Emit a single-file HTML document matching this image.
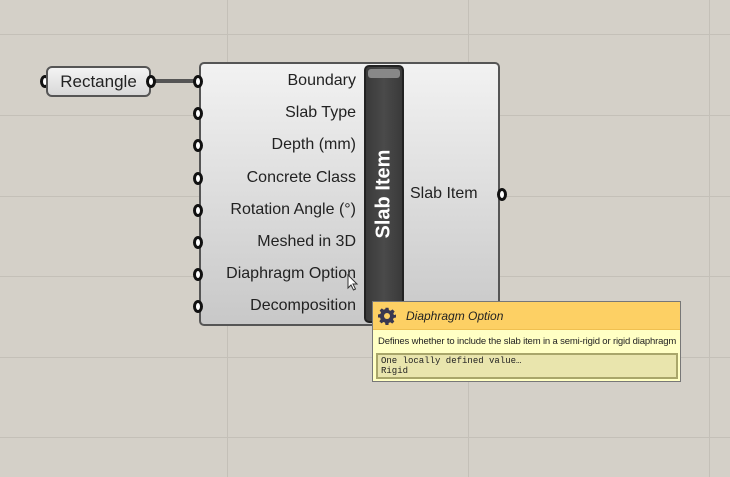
<!DOCTYPE html>
<html><head><meta charset="utf-8"><style>
*{margin:0;padding:0;box-sizing:border-box}
body{width:730px;height:477px;overflow:hidden;background:#d4d0c8;position:relative;font-family:"Liberation Sans",sans-serif}
.gh{position:absolute;left:0;width:730px;height:1px;background:#c4c0b8}
.gv{position:absolute;top:0;height:477px;width:1px;background:#c4c0b8}
.pill{position:absolute;left:46px;top:66px;width:105px;height:31px;border:2px solid #555;border-radius:6px;background:linear-gradient(#f4f4f4,#d8d8d8);font-size:17px;color:#222;text-align:center;line-height:27px}
.comp{position:absolute;left:199px;top:62px;width:301px;height:264px;border:2px solid #555;border-radius:5px;background:linear-gradient(#f2f2f2,#c8c8c8)}
.lbl{position:absolute;font-size:16px;color:#222;white-space:nowrap;line-height:20px}
.port{position:absolute;width:10px;height:13px;border:3px solid #111;border-radius:50%;background:#fff}
.bar{position:absolute;left:364px;top:65px;width:40px;height:258px;background:linear-gradient(90deg,#3a3a3a,#4a4a4a,#3a3a3a);border:2px solid #222;border-radius:5px}
.bar .hl{position:absolute;left:2px;right:2px;top:2px;height:9px;background:#888;border-radius:3px}
.bart{position:absolute;left:384px;top:194px;transform:translate(-50%,-50%) rotate(-90deg);color:#fff;font-weight:bold;font-size:20px;white-space:nowrap}
.tip{position:absolute;left:372px;top:301px;width:309px;height:81px;border:1px solid #777;background:#ffffc4}
.tiph{height:28px;background:#fdd064;border-bottom:1px solid #f0c050;position:relative}
.tiph span{position:absolute;left:33px;top:7px;font-size:12px;font-style:italic;color:#222}
.desc{position:absolute;left:5px;top:34px;font-size:9.5px;color:#222;white-space:nowrap;letter-spacing:-0.15px}
.box{position:absolute;left:3px;top:51px;width:302px;height:26px;border:2px solid #a9a66a;background:#e9e5ad;font-family:"Liberation Mono",monospace;font-size:9px;line-height:10px;padding:1px 3px;color:#222}
</style></head><body>
<div class="gh" style="top:34px"></div><div class="gh" style="top:115px"></div><div class="gh" style="top:196px"></div><div class="gh" style="top:276px"></div><div class="gh" style="top:357px"></div><div class="gh" style="top:437px"></div>
<div class="gv" style="left:227px"></div><div class="gv" style="left:468px"></div><div class="gv" style="left:709px"></div>
<div style="position:absolute;left:151px;top:79px;width:50px;height:4px;background:#555"></div>
<div class="port" style="left:40px;top:75px"></div>
<div class="pill">Rectangle</div>
<div class="port" style="left:146px;top:75px"></div>
<div class="comp"></div>
<div class="lbl" style="right:374px;top:71px">Boundary</div>
<div class="lbl" style="right:374px;top:103px">Slab Type</div>
<div class="lbl" style="right:374px;top:135px">Depth (mm)</div>
<div class="lbl" style="right:374px;top:168px">Concrete Class</div>
<div class="lbl" style="right:374px;top:200px">Rotation Angle (°)</div>
<div class="lbl" style="right:374px;top:232px">Meshed in 3D</div>
<div class="lbl" style="right:374px;top:264px">Diaphragm Option</div>
<div class="lbl" style="right:374px;top:296px">Decomposition</div>
<div class="port" style="left:193px;top:75px"></div>
<div class="port" style="left:193px;top:107px"></div>
<div class="port" style="left:193px;top:139px"></div>
<div class="port" style="left:193px;top:172px"></div>
<div class="port" style="left:193px;top:204px"></div>
<div class="port" style="left:193px;top:236px"></div>
<div class="port" style="left:193px;top:268px"></div>
<div class="port" style="left:193px;top:300px"></div>
<div class="bar"><div class="hl"></div></div>
<div class="bart">Slab Item</div>
<div class="lbl" style="left:410px;top:184px">Slab Item</div>
<div class="port" style="left:497px;top:188px"></div>
<svg style="position:absolute;left:347px;top:274px" width="12" height="18" viewBox="0 0 12 18"><path d="M1 1 L1 14 L4 11 L6.5 16 L8.5 15 L6 10 L10 10 Z" fill="#fff" stroke="#333" stroke-width="1"/></svg>
<div class="tip">
<div class="tiph">
<svg style="position:absolute;left:5px;top:5px" width="18" height="18" viewBox="0 0 24 24"><path fill="#3a3850" d="M10 1h4l.6 3.1 2.2.9 2.6-1.8 2.8 2.8-1.8 2.6.9 2.2L24 10v4l-3.1.6-.9 2.200 1.8 2.6-2.8 2.8-2.6-1.8-2.2.9L14 24h-4l-.6-3.1-2.2-.9-2.6 1.8-2.8-2.8 1.8-2.6-.9-2.2L0 14v-4l3.1-.6.9-2.2L2.2 4.6 5 1.8l2.6 1.8 2.2-.9z"/><circle cx="12" cy="12" r="4" fill="#fdd064"/></svg>
<span>Diaphragm Option</span></div>
<div class="desc">Defines whether to include the slab item in a semi-rigid or rigid diaphragm</div>
<div class="box">One locally defined value…<br>Rigid</div>
</div>
</body></html>
